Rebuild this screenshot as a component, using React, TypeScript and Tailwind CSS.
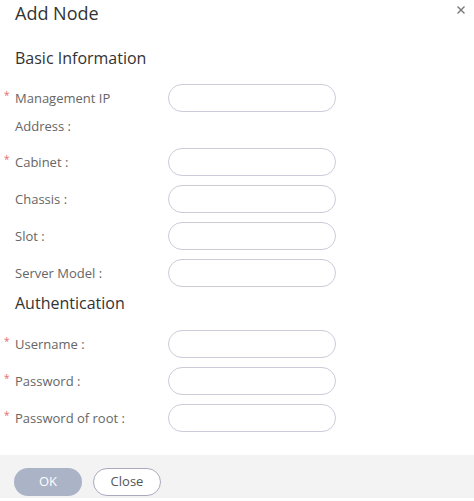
import React from "react";

const font = { fontFamily: '"Open Sans", "Liberation Sans", sans-serif' };

function Row({
  label,
  required,
}: {
  label: React.ReactNode;
  required?: boolean;
}) {
  return (
    <div className="flex items-start">
      <div className="relative w-[168px] shrink-0 pl-[15px] text-[13px] leading-[28px] text-[#666]">
        {required && (
          <span className="absolute left-[4px] top-[-3px] text-[10px] text-[#e86a6a]">*</span>
        )}
        {label}
      </div>
      <input
        className="h-[28px] w-[168px] rounded-full border border-[#cbccd8] bg-white outline-none"
        type="text"
      />
    </div>
  );
}

export default function App() {
  return (
    <div className="relative h-[501px] w-[474px] bg-white" style={font}>
      <div className="flex h-[26px] items-center pl-[15px] text-[18px] text-[#333]">Add Node</div>
      <button className="absolute right-[7px] top-[4px] text-[#777]" aria-label="close">
        <svg width="12" height="12" viewBox="0 0 12 12" stroke="currentColor" strokeWidth="1.4" fill="none">
          <path d="M2.5 2.5 L9.5 9.5 M9.5 2.5 L2.5 9.5" />
        </svg>
      </button>

      <div className="mt-[20px] flex h-[24px] items-center pl-[15px] text-[16px] text-[#333]">
        Basic Information
      </div>
      <div className="mt-[14px] flex flex-col gap-[9px]">
        <div className="mb-[-1px]">
          <Row
            required
            label={
              <>
                Management IP
                <br />
                Address :
              </>
            }
          />
        </div>
        <Row required label="Cabinet :" />
        <Row label="Chassis :" />
        <Row label="Slot :" />
        <Row label="Server Model :" />
      </div>

      <div className="mt-[4px] flex h-[24px] items-center pl-[15px] text-[16px] text-[#333]">
        Authentication
      </div>
      <div className="mt-[15px] flex flex-col gap-[9px]">
        <Row required label="Username :" />
        <Row required label="Password :" />
        <Row required label="Password of root :" />
      </div>

      <div className="mt-[23px] flex h-[43px] items-start gap-[11px] bg-[#f3f3f3] pl-[14px] pt-[13px]">
        <button className="h-[28px] w-[68px] rounded-full bg-[#abb3c6] text-[13px] text-white">OK</button>
        <button className="h-[28px] w-[68px] rounded-full border border-[#a9aabd] bg-white text-[13px] text-[#555]">
          Close
        </button>
      </div>
    </div>
  );
}
